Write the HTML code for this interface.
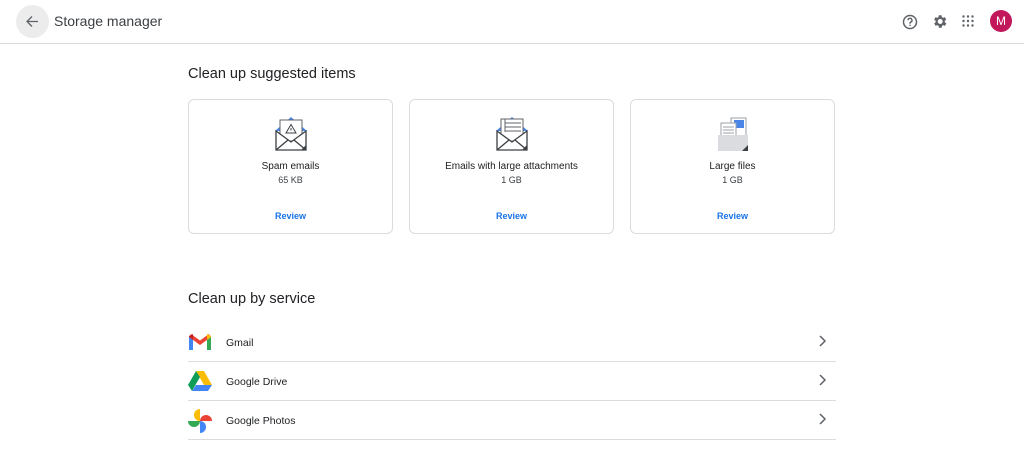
<!DOCTYPE html>
<html><head><style>
*{margin:0;padding:0;box-sizing:border-box}
body{width:1024px;height:464px;background:#fff;font-family:"Liberation Sans",Arial,sans-serif;color:#202124;position:relative;overflow:hidden}
.hdr{position:absolute;left:0;top:0;width:1024px;height:44px;border-bottom:1px solid #dadce0}
.back{position:absolute;left:16px;top:5px;width:33px;height:33px;border-radius:50%;background:#ececec}
.title{position:absolute;left:54px;top:13px;font-size:14px;color:#3c4043}
.h2{position:absolute;left:188px;font-size:14.5px;color:#202124}
.card{position:absolute;top:99px;width:205px;height:135px;border:1px solid #dadce0;border-radius:6px;text-align:center}
.card .n{position:absolute;top:61px;width:100%;font-size:10px;color:#202124}
.card .s{position:absolute;top:75px;width:100%;font-size:9px;color:#3c4043}
.card .r{position:absolute;top:111px;width:100%;font-size:9px;color:#1a73e8;font-weight:bold}
.card svg{position:absolute;left:84px;top:15px}
.row{position:absolute;left:188px;width:648px;height:39px;border-bottom:1px solid #dadce0}
.row .l{position:absolute;left:38px;top:14px;font-size:10.5px;color:#202124}
.row .i{position:absolute;left:0;top:8px}
.row .c{position:absolute;right:8px;top:12px}
</style></head><body>
<div class="hdr">
<div class="back"><svg width="33" height="33" viewBox="0 0 33 33"><path d="M22 16.5H11M16 11.5l-5 5 5 5" stroke="#5f6368" stroke-width="1.3" fill="none"/></svg></div>
<div class="title">Storage manager</div>
<svg style="position:absolute;left:902px;top:14px" width="16" height="16" viewBox="0 0 16 16"><circle cx="8" cy="8" r="6.5" stroke="#5f6368" stroke-width="1.5" fill="none"/><path d="M6 6.3a2 2 0 1 1 2.6 1.9c-.5.2-.6.5-.6 1v.5" stroke="#5f6368" stroke-width="1.4" fill="none"/><circle cx="8" cy="11.3" r=".8" fill="#5f6368"/></svg>
<svg style="position:absolute;left:931px;top:13px" width="17" height="17" viewBox="0 0 24 24"><path fill="#5f6368" d="M19.4 13a7.5 7.5 0 0 0 0-2l2.1-1.6-2-3.5-2.5 1a7 7 0 0 0-1.7-1L15 3.2h-4l-.4 2.7a7 7 0 0 0-1.7 1l-2.5-1-2 3.5L6.6 11a7.5 7.5 0 0 0 0 2l-2.1 1.6 2 3.5 2.5-1c.5.4 1.1.7 1.7 1l.4 2.7h4l.4-2.7c.6-.3 1.2-.6 1.7-1l2.5 1 2-3.5zM13 15.5a3.5 3.5 0 1 1 0-7 3.5 3.5 0 0 1 0 7z"/></svg>
<svg style="position:absolute;left:962px;top:15px" width="12" height="12" viewBox="0 0 12 12" fill="#5f6368"><circle cx="1.5" cy="1.5" r="1.2"/><circle cx="6" cy="1.5" r="1.2"/><circle cx="10.5" cy="1.5" r="1.2"/><circle cx="1.5" cy="6" r="1.2"/><circle cx="6" cy="6" r="1.2"/><circle cx="10.5" cy="6" r="1.2"/><circle cx="1.5" cy="10.5" r="1.2"/><circle cx="6" cy="10.5" r="1.2"/><circle cx="10.5" cy="10.5" r="1.2"/></svg>
<div style="position:absolute;left:990px;top:10px;width:22px;height:22px;border-radius:50%;background:#c2185b;color:#fff;font-size:12px;text-align:center;line-height:22px">M</div>
</div>
<div class="h2" style="top:66px">Clean up suggested items</div>
<div class="card" style="left:188px">
<svg width="36" height="38" viewBox="0 0 36 38"><path d="M2 16L18 2l16 14z" fill="#4a86e8"/><rect x="7" y="5" width="22" height="21" fill="#fff" stroke="#5f6368" stroke-width="1"/><path d="M18 9.5l-5 8.5h10z" fill="none" stroke="#3c4043"/><path d="M18 13v2.5" stroke="#3c4043"/><path d="M3 16v19h30V16L18 27z" fill="#fff" stroke="#3c4043" stroke-width="1.3"/><path d="M3 35l12-10M33 35l-12-10" stroke="#3c4043" stroke-width="1.3"/><path d="M33 30v5h-5z" fill="#3c4043"/></svg>
<div class="n">Spam emails</div><div class="s">65 KB</div><div class="r">Review</div></div>
<div class="card" style="left:409px">
<svg width="36" height="38" viewBox="0 0 36 38"><path d="M2 16L18 2l16 14z" fill="#4a86e8"/><rect x="7" y="4" width="22" height="22" fill="#fff" stroke="#5f6368"/><path d="M11 4v13M11 8h16M11 12h16M11 16h16" stroke="#5f6368"/><path d="M3 16v19h30V16L18 27z" fill="#fff" stroke="#3c4043" stroke-width="1.3"/><path d="M3 35l12-10M33 35l-12-10" stroke="#3c4043" stroke-width="1.3"/><path d="M33 30v5h-5z" fill="#3c4043"/></svg>
<div class="n">Emails with large attachments</div><div class="s">1 GB</div><div class="r">Review</div></div>
<div class="card" style="left:630px">
<svg width="36" height="38" viewBox="0 0 36 38"><rect x="16" y="3" width="15" height="20" fill="#fff" stroke="#9aa0a6"/><rect x="19" y="5" width="10" height="8" fill="#4a86e8"/><rect x="6" y="8" width="15" height="17" fill="#fff" stroke="#9aa0a6"/><path d="M8 12h11M8 15h11M8 18h11" stroke="#9aa0a6"/><path d="M3 20h30v16H3z" fill="#dadce0"/><path d="M33 30v6h-6z" fill="#3c4043"/></svg>
<div class="n">Large files</div><div class="s">1 GB</div><div class="r">Review</div></div>
<div class="h2" style="top:291px">Clean up by service</div>
<div class="row" style="top:323px"><svg class="i" width="24" height="22" viewBox="0 0 24 18"><path d="M1 4v13h4V7z" fill="#4285f4"/><path d="M19 7v10h4V4z" fill="#34a853"/><path d="M1 4l11 8 11-8-2-3-9 6.5L3 1z" fill="#ea4335"/><path d="M19 1v6l4-3V3z" fill="#fbbc04"/><path d="M1 3v1l4 3V1z" fill="#c5221f"/></svg><div class="l">Gmail</div><svg class="c" width="10" height="12"><path d="M2 1l5 5-5 5" stroke="#5f6368" stroke-width="1.5" fill="none"/></svg></div>
<div class="row" style="top:362px"><svg class="i" width="24" height="22" viewBox="0 0 24 22"><path d="M8 1h8l8 14h-8z" fill="#fbbc04"/><path d="M8 1L0 15l4 6 8-14z" fill="#0f9d58"/><path d="M4 21h16l4-6H8z" fill="#4285f4"/></svg><div class="l">Google Drive</div><svg class="c" width="10" height="12"><path d="M2 1l5 5-5 5" stroke="#5f6368" stroke-width="1.5" fill="none"/></svg></div>
<div class="row" style="top:401px"><svg class="i" width="24" height="24" viewBox="0 0 24 24"><path d="M12 0A6 6 0 0 0 12 12Z" fill="#fbbc04"/><path d="M12 12A6 6 0 0 1 24 12Z" fill="#ea4335"/><path d="M12 12A6 6 0 0 1 12 24Z" fill="#4285f4"/><path d="M0 12A6 6 0 0 0 12 12Z" fill="#34a853"/></svg><div class="l">Google Photos</div><svg class="c" width="10" height="12"><path d="M2 1l5 5-5 5" stroke="#5f6368" stroke-width="1.5" fill="none"/></svg></div>
</body></html>
